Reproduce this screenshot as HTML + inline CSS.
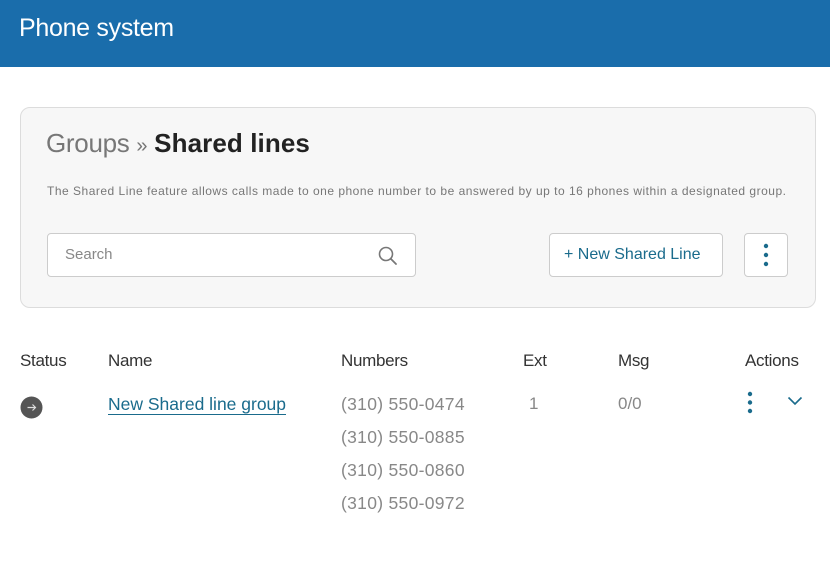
<!DOCTYPE html>
<html><head><style>
*{margin:0;padding:0;box-sizing:border-box}
body{width:830px;height:568px;background:#fff;font-family:"Liberation Sans",sans-serif;position:relative;overflow:hidden}
.a{position:absolute;white-space:nowrap}
</style></head><body>
<div class="a" style="left:0;top:0;width:830px;height:67px;background:#1a6dab"></div>
<div class="a" style="left:19px;top:14px;color:#fff;font-size:25px;letter-spacing:-0.3px">Phone system</div>
<div class="a" style="left:20px;top:107px;width:796px;height:201px;background:#f7f7f7;border:1px solid #dcdcdc;border-radius:10px"></div>
<div class="a" style="left:46px;top:128px;font-size:26px;color:#777;letter-spacing:-0.3px">Groups <span style="font-size:20px">»</span> <b style="color:#222;letter-spacing:0.1px">Shared lines</b></div>
<div class="a" style="left:47px;top:184px;font-size:12px;color:#777;letter-spacing:0.5px">The Shared Line feature allows calls made to one phone number to be answered by up to 16 phones within a designated group.</div>
<div class="a" style="left:47px;top:233px;width:369px;height:44px;background:#fff;border:1px solid #ccc;border-radius:4px"></div>
<div class="a" style="left:65px;top:246px;font-size:15px;color:#888">Search</div>
<svg class="a" style="left:377px;top:245px" width="22" height="22" viewBox="0 0 22 22"><circle cx="9" cy="9" r="6.5" fill="none" stroke="#777" stroke-width="1.6"/><path d="M14 14l5 5" stroke="#777" stroke-width="1.8" stroke-linecap="round"/></svg>
<div class="a" style="left:549px;top:233px;width:174px;height:44px;background:#fff;border:1px solid #ccc;border-radius:4px"></div>
<div class="a" style="left:564px;top:246px;font-size:16px;color:#1a6b8c">+ New Shared Line</div>
<div class="a" style="left:744px;top:233px;width:44px;height:44px;background:#fff;border:1px solid #ccc;border-radius:4px"></div>
<svg class="a" style="left:762px;top:243px" width="8" height="24"><circle cx="4" cy="3" r="2.2" fill="#1a6b8c"/><circle cx="4" cy="12" r="2.2" fill="#1a6b8c"/><circle cx="4" cy="21" r="2.2" fill="#1a6b8c"/></svg>
<div class="a" style="left:20px;top:351px;font-size:17px;color:#333;letter-spacing:-0.3px">Status</div>
<div class="a" style="left:108px;top:351px;font-size:17px;color:#333;letter-spacing:-0.3px">Name</div>
<div class="a" style="left:341px;top:351px;font-size:17px;color:#333;letter-spacing:-0.3px">Numbers</div>
<div class="a" style="left:523px;top:351px;font-size:17px;color:#333;letter-spacing:-0.3px">Ext</div>
<div class="a" style="left:618px;top:351px;font-size:17px;color:#333;letter-spacing:-0.3px">Msg</div>
<div class="a" style="left:745px;top:351px;font-size:17px;color:#333;letter-spacing:-0.3px">Actions</div>
<svg class="a" style="left:20px;top:396px" width="23" height="23"><circle cx="11.5" cy="11.5" r="11" fill="#555"/><path d="M7.5 11.5h8M12.5 8.5l3 3-3 3" stroke="#ddd" stroke-width="1.2" fill="none"/></svg>
<div class="a" style="left:108px;top:394px;font-size:17.5px;color:#1a6b8c;border-bottom:1px solid #1a6b8c;line-height:20px">New Shared line group</div>
<div class="a" style="left:341px;top:388px;font-size:17.5px;color:#888;line-height:33px;letter-spacing:0.3px">(310) 550-0474<br>(310) 550-0885<br>(310) 550-0860<br>(310) 550-0972</div>
<div class="a" style="left:529px;top:394px;font-size:17px;color:#888;line-height:20px">1</div>
<div class="a" style="left:618px;top:394px;font-size:17px;color:#888;line-height:20px">0/0</div>
<svg class="a" style="left:746px;top:391px" width="8" height="24"><circle cx="4" cy="3" r="2.2" fill="#1a6b8c"/><circle cx="4" cy="11.5" r="2.2" fill="#1a6b8c"/><circle cx="4" cy="20" r="2.2" fill="#1a6b8c"/></svg>
<svg class="a" style="left:787px;top:396px" width="16" height="10"><path d="M1.5 1.5l6.5 6.5 6.5-6.5" stroke="#1a6b8c" stroke-width="1.6" fill="none"/></svg>
</body></html>
